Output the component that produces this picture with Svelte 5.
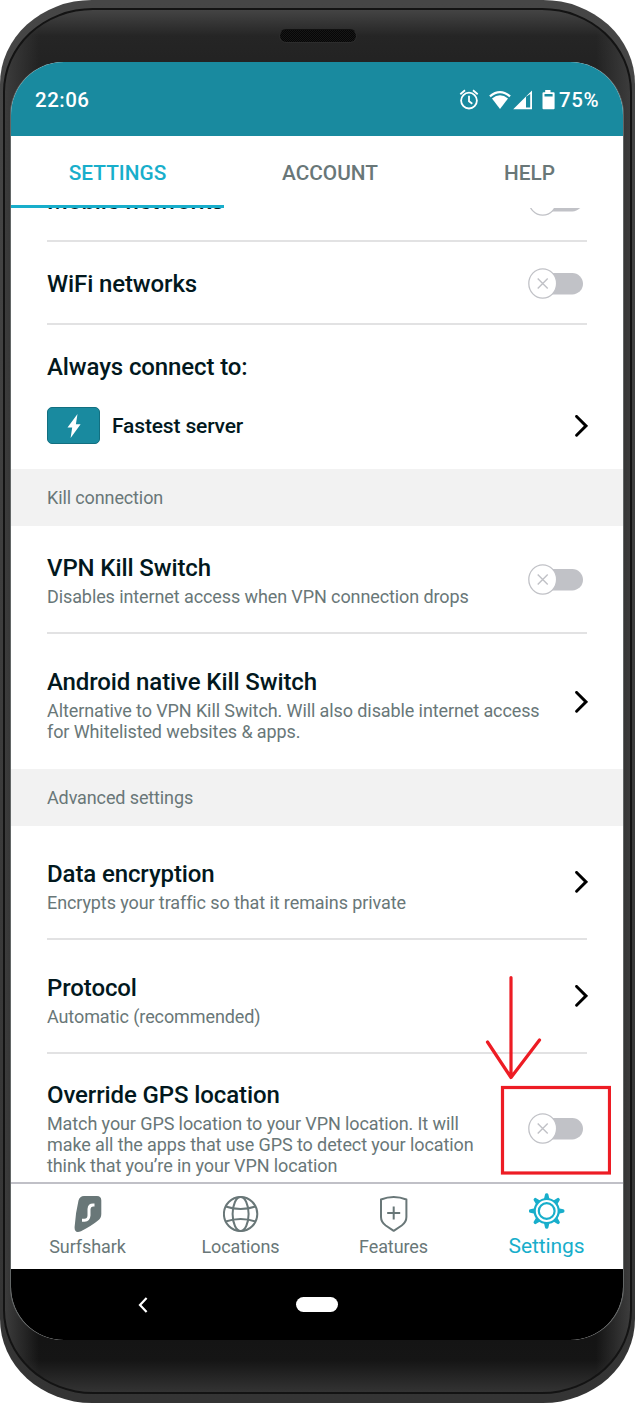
<script lang="ts">
	type Row = { title: string; lines: string[]; kind: 'toggle' | 'link'; size: string };

	const tabs = ['SETTINGS', 'ACCOUNT', 'HELP'];
	let activeTab = $state('SETTINGS');

	const killRows: Row[] = [
		{
			title: 'VPN Kill Switch',
			lines: ['Disables internet access when VPN connection drops'],
			kind: 'toggle',
			size: 'kill'
		},
		{
			title: 'Android native Kill Switch',
			lines: [
				'Alternative to VPN Kill Switch. Will also disable internet access',
				'for Whitelisted websites & apps.'
			],
			kind: 'link',
			size: 'native'
		}
	];

	const advancedRows: Row[] = [
		{
			title: 'Data encryption',
			lines: ['Encrypts your traffic so that it remains private'],
			kind: 'link',
			size: 'data'
		},
		{
			title: 'Protocol',
			lines: ['Automatic (recommended)'],
			kind: 'link',
			size: 'protocol'
		},
		{
			title: 'Override GPS location',
			lines: [
				'Match your GPS location to your VPN location. It will',
				'make all the apps that use GPS to detect your location',
				'think that you’re in your VPN location'
			],
			kind: 'toggle',
			size: 'gps'
		}
	];

	const teeth = [0, 45, 90, 135, 180, 225, 270, 315];
</script>

{#snippet toggle()}
	<svg class="toggle" width="55" height="31" viewBox="0 0 55 31">
		<rect x="14" y="5" width="41" height="21.5" rx="10.7" fill="#c1c2c7" />
		<ellipse cx="14.7" cy="15.5" rx="13.9" ry="14.7" fill="#fff" stroke="#c1c2c7" stroke-width="1.3" />
		<path d="M9.7 10.4l10 10.2M19.7 10.4l-10 10.2" stroke="#c1c2c7" stroke-width="1.4" />
	</svg>
{/snippet}

{#snippet chevron()}
	<svg class="chevron" width="13" height="22" viewBox="0 0 13 22">
		<path d="M1.6 1.4l9.400 9.500-9.400 9.300" fill="none" stroke="#000" stroke-width="2.9" stroke-linecap="round" />
	</svg>
{/snippet}

{#snippet settingRow(row: Row)}
	<div class="row {row.size}">
		<div class="copy">
			<h2>{row.title}</h2>
			<p>
				{#each row.lines as line}
					<span>{line}</span>
				{/each}
			</p>
		</div>
		{#if row.kind === 'toggle'}
			{@render toggle()}
		{:else}
			{@render chevron()}
		{/if}
	</div>
{/snippet}

<div class="phone">
	<div class="bezel">
		<div class="earpiece"><div class="speaker"></div></div>
		<div class="screen">
			<div class="status">
				<span class="time">22:06</span>
				<svg width="102" height="24" viewBox="0 0 102 24" fill="#fff">
					<g fill="none" stroke="#fff" stroke-width="1.8">
						<circle cx="10" cy="12.6" r="7.9" />
						<path d="M10 7.7v5.5l3.3 2.5M1.3 6.2l4.7-4M18.7 6.2l-4.7-4" />
					</g>
					<path d="M30.2 7.4Q41-1.5 51.8 7.4L50.3 9.2Q41 1.5 31.7 9.2z" />
					<path d="M33 10.6Q41 3.8 49 10.6L41 20.9z" />
					<path d="M73 2.5v18.7H54.2zm-6 6.2v10.9h4.2V6z" fill-rule="evenodd" />
					<path d="M86.2 2h5.3v2.2h3.1q1 0 1 1v15q0 1-1 1H84.5q-1 0-1-1v-15q0-1 1-1h1.7zM85.5 6v2.6h8.1V6z" fill-rule="evenodd" />
				</svg>
				<span class="percent">75%</span>
			</div>
			<div class="tabs">
				{#each tabs as tab}
					<button class="tab" class:active={tab === activeTab} onclick={() => (activeTab = tab)}>{tab}</button>
				{/each}
			</div>
			<div class="list">
				<div class="row network mobile">
					<h2>Mobile networks</h2>
					{@render toggle()}
				</div>
				<div class="row network">
					<h2>WiFi networks</h2>
					{@render toggle()}
				</div>
				<div class="connect">
					<h2>Always connect to:</h2>
					<div class="server">
						<span class="flag">
							<svg width="14" height="24" viewBox="0 0 14 24">
								<path d="M10.5 0L.5 13.5h4.7L3.6 24l10-13.700H8.900z" fill="#fff" />
							</svg>
						</span>
						<span class="server-name">Fastest server</span>
						{@render chevron()}
					</div>
				</div>
				<div class="section">Kill connection</div>
				{#each killRows as row}
					{@render settingRow(row)}
				{/each}
				<div class="section">Advanced settings</div>
				{#each advancedRows as row}
					{@render settingRow(row)}
				{/each}
			</div>
			<nav class="bottom-nav">
				<div class="item">
					<svg width="36" height="38" viewBox="0 0 36 38">
						<path d="M14 1H27Q31.3 1 31.3 5.5V19Q31.3 23 28 25.5 22 30.5 11 36.3 4.3 39 4.6 32 5.5 18 8.5 5.5 9.8 1 14 1z" fill="#697778" />
						<path d="M24.500 10h-1.500Q19.300 10 19 14V20.500Q18.700 25 14.500 25.300H12" fill="none" stroke="#fff" stroke-width="3" />
					</svg>
					<span>Surfshark</span>
				</div>
				<div class="item">
					<svg width="36" height="38" viewBox="0 0 36 38" fill="none" stroke="#697778" stroke-width="2">
						<ellipse cx="17.600" cy="19" rx="16.700" ry="17" />
						<ellipse cx="17.600" cy="19" rx="8" ry="17" />
						<path d="M2.600 11.500Q17.600 16.500 32.600 11.500M2.600 26.500Q17.600 21.500 32.600 26.500" />
					</svg>
					<span>Locations</span>
				</div>
				<div class="item">
					<svg width="36" height="38" viewBox="0 0 36 38" fill="none" stroke="#697778" stroke-width="2">
						<path d="M5 4.500Q17.700-.500 30.400 4.500v17.500Q30.400 27 25.700 30.500L17.700 35.800 9.700 30.500Q5 27 5 22z" stroke-linejoin="round" />
						<path d="M17.700 11.500v13M11.200 18h13" />
					</svg>
					<span>Features</span>
				</div>
				<div class="item current">
					<svg width="36" height="38" viewBox="0 0 36 38" fill="none" stroke="#18aecb" stroke-width="2.2">
						<circle cx="17.700" cy="19" r="12" />
						<circle cx="17.700" cy="19" r="7.900" />
						{#each teeth as angle}
							<path d="M14.900 7.200L16 2.500Q16.200 1.200 17.700 1.200T19.400 2.500L20.500 7.200z" fill="#18aecb" stroke="none" transform="rotate({angle} 17.7 19)" />
						{/each}
					</svg>
					<span>Settings</span>
				</div>
			</nav>
			<div class="system-nav">
				<svg width="10" height="16" viewBox="0 0 10 16">
					<path d="M8.600 1L2 8l6.600 7" fill="none" stroke="#fff" stroke-width="2.200" />
				</svg>
				<span class="home"></span>
			</div>
		</div>
	</div>

	<svg class="annotation" width="126" height="202" viewBox="0 0 126 202" fill="none" stroke="#ed1c24">
		<path d="M26 2.500v98.500M2.500 67L26 102.500 54.500 65" stroke-width="3.200" stroke-linecap="round" stroke-linejoin="round" />
		<rect x="17.500" y="112.500" width="107" height="85.500" stroke-width="3.200" />
	</svg>
</div>

<style>
	:global(body) {
		background: #fff;
	}
	.phone {
		position: relative;
		box-sizing: border-box;
		width: 635px;
		height: 1403px;
		padding: 8px 3px 9px;
		border-radius: 92px / 84px;
		background: linear-gradient(#464646, #3e3e3e 40%, #343434);
		font-family: Roboto, sans-serif;
		overflow: hidden;
	}
	.bezel {
		box-sizing: border-box;
		height: 1386px;
		padding: 0 6px;
		border: 2px solid #131313;
		border-radius: 90px / 84px;
		background:
			linear-gradient(90deg, #3c3c3c, transparent 34px, transparent 591px, #3c3c3c),
			linear-gradient(#444, #252525 26px, #222 60px, #141414 1330px, #151515 1350px, #333);
	}
	.earpiece {
		height: 52px;
		display: flex;
		justify-content: center;
		align-items: center;
	}
	.speaker {
		width: 76px;
		height: 12px;
		border-radius: 7px;
		background: repeating-conic-gradient(#060606 0 25%, #161616 0 50%) 0 0 / 2px 2px;
		border: 1px solid #2c2c2c;
		border-top-color: #111;
	}
	.screen {
		width: 612px;
		height: 1278px;
		border-radius: 53px;
		background: #fff;
		overflow: hidden;
		box-shadow: -1px 0 #626666, 1px 0 #626666;
	}
	.status {
		box-sizing: border-box;
		height: 74px;
		padding: 1px 24px 0;
		display: flex;
		align-items: center;
		background: #198a9f;
		color: #fff;
		font-size: 20.5px;
		font-weight: 500;
		letter-spacing: 0.5px;
	}
	.time {
		margin-right: auto;
	}
	.percent {
		margin-left: -2px;
	}
	.tabs {
		height: 72px;
		display: grid;
		grid-template-columns: 213px 212px 187px;
	}
	.tab {
		height: 72px;
		padding: 5px 0 0;
		border: 0;
		border-bottom: 3px solid transparent;
		background: none;
		color: #697778;
		font: 500 20.8px Roboto, sans-serif;
	}
	.tab.active {
		color: #18aecb;
		border-color: #18aecb;
	}
	.list {
		height: 974px;
		overflow: hidden;
	}
	h2 {
		margin: 0;
		color: #02181d;
		font-size: 24px;
		line-height: 28px;
		font-weight: 500;
		letter-spacing: -0.11px;
	}
	p {
		margin: 3.5px 0 0;
		color: #697778;
		font-size: 18px;
		line-height: 21px;
		letter-spacing: -0.1px;
		white-space: nowrap;
	}
	p span {
		display: block;
	}
	.row {
		box-sizing: border-box;
		margin: 0 36px;
		display: flex;
		justify-content: space-between;
		align-items: center;
		border-bottom: 2px solid #e2e2e3;
	}
	.toggle {
		flex: none;
		margin-right: 4px;
	}
	.chevron {
		flex: none;
		margin-right: -1px;
	}
	.network {
		height: 83px;
		padding-top: 2px;
	}
	.mobile {
		margin-top: -49px;
	}
	.connect {
		box-sizing: border-box;
		height: 144px;
		padding: 28px 36px 0;
	}
	.server {
		margin-top: 26px;
		display: flex;
		align-items: center;
	}
	.flag {
		box-sizing: border-box;
		width: 53px;
		height: 37px;
		display: flex;
		justify-content: center;
		align-items: center;
		border: 1px solid #126f80;
		border-radius: 5px;
		background: #198a9f;
	}
	.server-name {
		margin: 0 auto 0 12px;
		color: #02181d;
		font-size: 21px;
		font-weight: 500;
		letter-spacing: -0.15px;
	}
	.section {
		height: 57px;
		padding-left: 36px;
		background: #f2f2f2;
		color: #697778;
		font-size: 18px;
		line-height: 58px;
		letter-spacing: -0.12px;
	}
	.copy {
		align-self: flex-start;
	}
	.kill {
		height: 108px;
	}
	.kill .copy {
		padding-top: 28px;
	}
	.kill p {
		margin-top: 4px;
	}
	.native {
		height: 135px;
		border: 0;
	}
	.native .copy,
	.data .copy,
	.protocol .copy {
		padding-top: 34px;
	}
	.data,
	.protocol {
		height: 114px;
	}
	.gps {
		height: 149px;
		border: 0;
	}
	.gps .copy {
		padding-top: 27px;
	}
	.gps p {
		margin-top: 4px;
	}
	.bottom-nav {
		box-sizing: border-box;
		height: 87px;
		padding-top: 11px;
		display: grid;
		grid-template-columns: repeat(4, 153px);
		border-top: 2px solid #c0c0c7;
	}
	.item {
		display: flex;
		flex-direction: column;
		align-items: center;
		color: #697778;
		font-size: 18px;
		letter-spacing: -0.1px;
	}
	.item span {
		margin-top: 3px;
		line-height: 21px;
	}
	.current {
		color: #18aecb;
		font-size: 21px;
	}
	.current svg {
		margin-top: -3px;
	}
	.current span {
		margin-top: 6px;
	}
	.system-nav {
		box-sizing: border-box;
		height: 71px;
		padding-left: 127px;
		display: flex;
		align-items: center;
		background: #000;
	}
	.home {
		width: 42px;
		height: 15px;
		margin-left: 148px;
		border-radius: 8px;
		background: #fff;
	}
	.annotation {
		position: absolute;
		left: 485px;
		top: 975px;
	}
</style>
